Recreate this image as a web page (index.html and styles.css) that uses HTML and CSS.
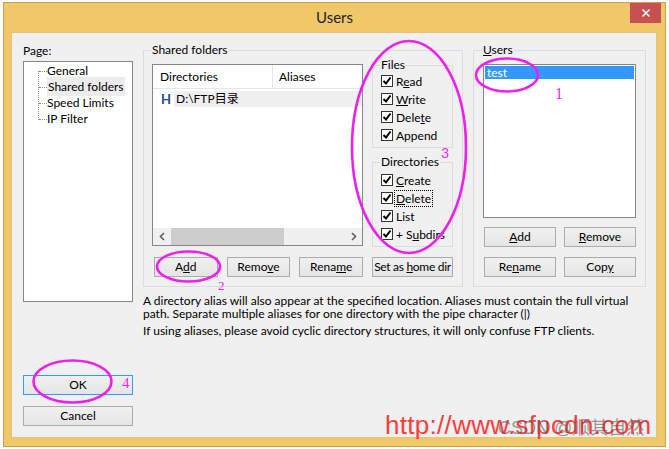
FILE: index.html
```html
<!DOCTYPE html>
<html lang="en">
<head>
    <meta charset="UTF-8">
    <meta name="viewport" content="width=device-width, initial-scale=1.0">
    <title>Users</title>
    <link rel="stylesheet" href="styles.css">
</head>
<body>
    <div class="window">
        <div class="titlebar">
            <div class="title">Users</div>
            <div class="closebtn">
                <svg width="10" height="10" viewBox="0 0 10 10"><path d="M1.5 1.5L8.5 8.5M8.5 1.5L1.5 8.5" stroke="#fff" stroke-width="1.5"/></svg>
            </div>
        </div>
        <div class="client">
            <div class="pagecol">
                <div class="pagelabel">Page:</div>
                <div class="tree">
                    <ul>
                        <li>General</li>
                        <li><span class="current">Shared folders</span></li>
                        <li>Speed Limits</li>
                        <li>IP Filter</li>
                    </ul>
                </div>
                <div class="dlgbuttons">
                    <button class="btn default">OK</button>
                    <button class="btn">Cancel</button>
                </div>
            </div>
            <div class="pagebody">
                <div class="groups">
                    <fieldset class="group shared">
                        <legend>Shared folders</legend>
                        <div class="sharedgrid">
                            <div class="dirlist">
                                <div class="dirhead">
                                    <div class="col1">Directories</div>
                                    <div class="col2">Aliases</div>
                                </div>
                                <div class="dirrow">
                                    <span class="home">H</span>
                                    <span class="path">D:\FTP目录</span>
                                </div>
                                <div class="hscroll">
                                    <div class="arrow"><svg width="6" height="9" viewBox="0 0 6 9"><path d="M5 1L1.5 4.5L5 8" fill="none" stroke="#606060" stroke-width="1.6"/></svg></div>
                                    <div class="thumb"></div>
                                    <div class="track"></div>
                                    <div class="arrow"><svg width="6" height="9" viewBox="0 0 6 9"><path d="M1 1L4.5 4.5L1 8" fill="none" stroke="#606060" stroke-width="1.6"/></svg></div>
                                </div>
                            </div>
                            <div class="perms">
                                <fieldset class="subgroup files">
                                    <legend>Files</legend>
                                    <div class="check"><span class="box"><svg width="10" height="10" viewBox="0 0 10 10"><path d="M1.5 5L4 7.5L8.5 1.5" fill="none" stroke="#000" stroke-width="2"/></svg></span><span>R<u>e</u>ad</span></div>
                                    <div class="check"><span class="box"><svg width="10" height="10" viewBox="0 0 10 10"><path d="M1.5 5L4 7.5L8.5 1.5" fill="none" stroke="#000" stroke-width="2"/></svg></span><span><u>W</u>rite</span></div>
                                    <div class="check"><span class="box"><svg width="10" height="10" viewBox="0 0 10 10"><path d="M1.5 5L4 7.5L8.5 1.5" fill="none" stroke="#000" stroke-width="2"/></svg></span><span>Dele<u>t</u>e</span></div>
                                    <div class="check"><span class="box"><svg width="10" height="10" viewBox="0 0 10 10"><path d="M1.5 5L4 7.5L8.5 1.5" fill="none" stroke="#000" stroke-width="2"/></svg></span><span>Append</span></div>
                                </fieldset>
                                <fieldset class="subgroup dirs">
                                    <legend>Directories</legend>
                                    <div class="check"><span class="box"><svg width="10" height="10" viewBox="0 0 10 10"><path d="M1.5 5L4 7.5L8.5 1.5" fill="none" stroke="#000" stroke-width="2"/></svg></span><span><u>C</u>reate</span></div>
                                    <div class="check"><span class="box"><svg width="10" height="10" viewBox="0 0 10 10"><path d="M1.5 5L4 7.5L8.5 1.5" fill="none" stroke="#000" stroke-width="2"/></svg></span><span class="focus"><u>D</u>elete</span></div>
                                    <div class="check"><span class="box"><svg width="10" height="10" viewBox="0 0 10 10"><path d="M1.5 5L4 7.5L8.5 1.5" fill="none" stroke="#000" stroke-width="2"/></svg></span><span>List</span></div>
                                    <div class="check"><span class="box"><svg width="10" height="10" viewBox="0 0 10 10"><path d="M1.5 5L4 7.5L8.5 1.5" fill="none" stroke="#000" stroke-width="2"/></svg></span><span>+ S<u>u</u>bdirs</span></div>
                                </fieldset>
                            </div>
                            <div class="dirbuttons">
                                <button class="btn">A<u>d</u>d</button>
                                <button class="btn">Remo<u>v</u>e</button>
                                <button class="btn">Rena<u>m</u>e</button>
                            </div>
                            <button class="btn homebtn">Set as <u>h</u>ome dir</button>
                        </div>
                    </fieldset>
                    <fieldset class="group users">
                        <legend><u>U</u>sers</legend>
                        <div class="userlist">
                            <div class="sel">test</div>
                        </div>
                        <div class="userbuttons">
                            <button class="btn"><u>A</u>dd</button>
                            <button class="btn"><u>R</u>emove</button>
                            <button class="btn">Re<u>n</u>ame</button>
                            <button class="btn">Cop<u>y</u></button>
                        </div>
                    </fieldset>
                </div>
                <div class="desc">
                    <p>A directory alias will also appear at the specified location. Aliases must contain the full virtual<br>path. Separate multiple aliases for one directory with the pipe character (|)</p>
                    <p>If using aliases, please avoid cyclic directory structures, it will only confuse FTP clients.</p>
                </div>
            </div>
        </div>
    </div>

    <svg class="marks" width="669" height="449" viewBox="0 0 669 449">
        <ellipse cx="507" cy="75" rx="31" ry="16.5"/>
        <ellipse cx="409" cy="147" rx="57" ry="106"/>
        <ellipse cx="188.5" cy="266.5" rx="31.5" ry="15"/>
        <ellipse cx="72.5" cy="381.5" rx="39" ry="21"/>
        <text class="serif" x="555" y="99" font-size="16">1</text>
        <text class="serif" x="218" y="290" font-size="13">2</text>
        <text class="sans" x="441" y="158" font-size="14">3</text>
        <text class="serif" x="122" y="388" font-size="15">4</text>
    </svg>
    <div class="site">http://www.sfpcdn.com</div>
    <div class="csdn">CSDN @顺其自然</div>
</body>
</html>
```

FILE: styles.css
```css
body
{
    margin: 0;
    background-color: #ffffff;
    font-family: Lato, "Noto Sans CJK SC", sans-serif;
    font-size: 12px;
    color: #000;
}
.window
{
    margin: 2px 0 0 3px;
    width: 663px;
    height: 445px;
    box-sizing: border-box;
    border: 1px solid #c9a24b;
    background-color: #f0c869;
}
.titlebar
{
    height: 29px;
    display: flex;
    align-items: center;
    justify-content: center;
    position: relative;
}
.title
{
    font-size: 15px;
    color: #222;
    margin-top: -1px;
}
.closebtn
{
    position: absolute;
    right: 4px;
    top: 0;
    width: 31px;
    height: 20px;
    background-color: #c75050;
    display: flex;
    align-items: center;
    justify-content: center;
}
.client
{
    margin: 0 8px 0 7px;
    height: 406px;
    box-sizing: border-box;
    background-color: #f0f0f0;
    border: 1px solid #e2c47c;
    padding-left: 11px;
    display: grid;
    grid-template-columns: 110px 503px;
    column-gap: 10px;
}
.pagecol
{
    display: flex;
    flex-direction: column;
}
.pagelabel
{
    margin-top: 10px;
    line-height: 16px;
}
.tree
{
    margin-top: 2px;
    height: 241px;
    box-sizing: border-box;
    border: 1px solid #828790;
    background-color: #fff;
}
.tree ul
{
    list-style: none;
    margin: 0;
    padding: 1px 0 0 0;
    position: relative;
}
.tree ul::after
{
    content: "";
    position: absolute;
    left: 14px;
    top: 9px;
    bottom: 7px;
    border-left: 1px dotted #909090;
}
.tree li
{
    position: relative;
    height: 16px;
    line-height: 16px;
    padding-left: 23px;
}
.tree li::before
{
    content: "";
    position: absolute;
    left: 15px;
    top: 8px;
    width: 8px;
    border-top: 1px dotted #909090;
}
.current
{
    background-color: #ececec;
    padding: 2px 1px;
}
.dlgbuttons
{
    margin-top: 73px;
    display: flex;
    flex-direction: column;
    gap: 11px;
}
.btn
{
    height: 20px;
    box-sizing: border-box;
    border: 1px solid #acacac;
    background: linear-gradient(#f0f0f0, #e5e5e5);
    font: inherit;
    color: #000;
    padding: 0;
    line-height: 18px;
    text-align: center;
    white-space: nowrap;
}
.btn.default
{
    border-color: #3399ff;
}
.homebtn
{
    letter-spacing: -0.3px;
}
.groups
{
    margin-top: 9px;
    display: flex;
    gap: 10px;
}
fieldset
{
    margin: 0;
    min-width: 0;
    border: 1px solid #dcdcdc;
}
legend
{
    padding: 0 1px;
    margin-left: -1px;
    line-height: 16px;
}
.group
{
    box-sizing: border-box;
    padding: 6px 9px 9px 8px;
}
.shared
{
    width: 320px;
}
.users
{
    width: 173px;
    padding-left: 9px;
}
.sharedgrid
{
    display: grid;
    grid-template-columns: 211px 81px;
    column-gap: 9px;
    row-gap: 10px;
}
.dirlist
{
    height: 182px;
    box-sizing: border-box;
    border: 1px solid #828790;
    background-color: #fff;
    display: flex;
    flex-direction: column;
}
.dirhead
{
    display: flex;
    height: 24px;
    box-sizing: border-box;
    border-bottom: 1px solid #e5e5e5;
    line-height: 23px;
}
.col1
{
    width: 120px;
    box-sizing: border-box;
    padding-left: 7px;
    border-right: 1px solid #e3e8f0;
}
.col2
{
    padding-left: 6px;
}
.dirrow
{
    margin-top: 2px;
    height: 16px;
    display: flex;
    align-items: center;
}
.home
{
    width: 21px;
    box-sizing: border-box;
    padding-left: 8px;
    font-weight: bold;
    font-size: 13px;
    color: #1f4f80;
}
.path
{
    flex: 1;
    height: 16px;
    line-height: 16px;
    padding-left: 2px;
    background-color: #efefef;
}
.hscroll
{
    margin-top: auto;
    height: 17px;
    display: flex;
    background-color: #f0f0f0;
}
.arrow
{
    width: 17px;
    display: flex;
    align-items: center;
    justify-content: center;
}
.thumb
{
    width: 113px;
    margin-left: 1px;
    background-color: #cdcdcd;
}
.track
{
    flex: 1;
}
.perms
{
    margin-top: -6px;
}
.subgroup
{
    padding: 0 3px 3px 8px;
}
.subgroup legend
{
    line-height: 14px;
}
.dirs
{
    margin-top: 7px;
    padding-top: 2px;
}
.check
{
    display: flex;
    align-items: center;
    height: 18px;
    gap: 3px;
    white-space: nowrap;
}
.box
{
    width: 12px;
    height: 12px;
    box-sizing: border-box;
    border: 1px solid #333;
    background-color: #fff;
    display: flex;
    align-items: center;
    justify-content: center;
    flex-shrink: 0;
}
.focus
{
    outline: 1px dotted #000;
    outline-offset: 0;
    padding: 0 1px;
    margin-left: -1px;
}
.dirbuttons
{
    display: flex;
    gap: 9px;
    padding-left: 2px;
}
.dirbuttons .btn
{
    width: 64px;
}
.userlist
{
    height: 154px;
    box-sizing: border-box;
    border: 1px solid #828790;
    background-color: #fff;
    padding: 1px;
}
.sel
{
    height: 13px;
    line-height: 13px;
    padding-left: 2px;
    background-color: #3399ff;
    color: #fff;
}
.userbuttons
{
    margin-top: 9px;
    margin-left: 1px;
    display: grid;
    grid-template-columns: 72px 72px;
    column-gap: 8px;
    row-gap: 10px;
}
.desc
{
    margin-top: 7px;
    line-height: 13px;
    white-space: nowrap;
}
.desc p
{
    margin: 0;
}
.desc p + p
{
    margin-top: 4px;
}
.marks
{
    position: absolute;
    left: 0;
    top: 0;
    pointer-events: none;
}
.marks ellipse
{
    fill: none;
    stroke: #ee1fee;
    stroke-width: 2.6;
}
.marks text
{
    fill: #ee1fee;
}
.marks .serif
{
    font-family: "Liberation Serif", serif;
}
.marks .sans
{
    font-family: Lato, sans-serif;
}
.site
{
    position: absolute;
    left: 385px;
    top: 412px;
    font-family: "Liberation Sans", sans-serif;
    font-size: 26px;
    line-height: 26px;
    letter-spacing: 0.3px;
    color: #ff3b3b;
    white-space: nowrap;
}
.csdn
{
    position: absolute;
    left: 498px;
    top: 419px;
    font-family: "Liberation Sans", "Noto Sans CJK SC", sans-serif;
    font-size: 18px;
    line-height: 18px;
    color: rgba(90, 90, 90, 0.6);
    white-space: nowrap;
}
```
